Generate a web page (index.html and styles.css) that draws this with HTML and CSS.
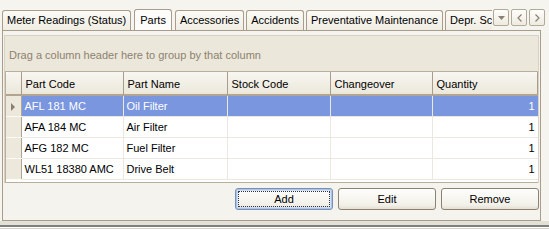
FILE: index.html
```html
<!DOCTYPE html>
<html lang="en">

<head>
  <meta charset="UTF-8">
  <title>Parts</title>
  <link rel="stylesheet" href="styles.css">
</head>

<body>
  <div class="tabStrip">
    <div class="tabs">
      <div class="tab">Meter Readings (Status)</div>
      <div class="tab active">Parts</div>
      <div class="tab">Accessories</div>
      <div class="tab">Accidents</div>
      <div class="tab">Preventative Maintenance</div>
      <div class="tab">Depr. Schedule</div>
    </div>
    <div class="tabBtns">
      <div class="tabBtn">
        <svg width="7" height="4" viewBox="0 0 7 4"><path d="M0 0h7L3.5 4z" fill="#8a8070"/></svg>
      </div>
      <div class="tabBtn">
        <svg width="5" height="8" viewBox="0 0 5 8"><path d="M4.5 0.5L1 4l3.5 3.5" fill="none" stroke="#8a8070" stroke-width="1.2"/></svg>
      </div>
      <div class="tabBtn">
        <svg width="5" height="8" viewBox="0 0 5 8"><path d="M0.5 0.5L4 4 0.5 7.5" fill="none" stroke="#8a8070" stroke-width="1.2"/></svg>
      </div>
    </div>
  </div>

  <div class="panel">
    <div class="gridBox">
      <div class="groupArea">Drag a column header here to group by that column</div>
      <div class="grid">
        <table>
          <colgroup>
            <col style="width:15px">
            <col style="width:102px">
            <col style="width:104px">
            <col style="width:103px">
            <col style="width:102px">
            <col>
          </colgroup>
          <thead>
            <tr>
              <th class="ind first"></th>
              <th>Part Code</th>
              <th>Part Name</th>
              <th>Stock Code</th>
              <th>Changeover</th>
              <th class="last">Quantity</th>
            </tr>
          </thead>
          <tbody>
            <tr class="sel">
              <td class="ind"><span class="arrow"></span></td>
              <td>AFL 181 MC</td>
              <td>Oil Filter</td>
              <td></td>
              <td></td>
              <td class="num">1</td>
            </tr>
            <tr>
              <td class="ind"></td>
              <td>AFA 184 MC</td>
              <td>Air Filter</td>
              <td></td>
              <td></td>
              <td class="num">1</td>
            </tr>
            <tr>
              <td class="ind"></td>
              <td>AFG 182 MC</td>
              <td>Fuel Filter</td>
              <td></td>
              <td></td>
              <td class="num">1</td>
            </tr>
            <tr>
              <td class="ind"></td>
              <td>WL51 18380 AMC</td>
              <td>Drive Belt</td>
              <td></td>
              <td></td>
              <td class="num">1</td>
            </tr>
          </tbody>
        </table>
      </div>
    </div>
    <div class="actions">
      <button class="btn focus"><span>Add</span></button>
      <button class="btn"><span>Edit</span></button>
      <button class="btn"><span>Remove</span></button>
    </div>
  </div>

  <div class="bottomEdge"></div>
</body>

</html>
```

FILE: styles.css
```css
* {
  margin: 0;
  padding: 0;
  box-sizing: border-box;
}
body {
  background: #f5f4ef;
  font-family: "Liberation Sans", Arial, sans-serif;
  font-size: 11px;
  color: #000;
  width: 549px;
  height: 229px;
  overflow: hidden;
}
.tabStrip {
  display: flex;
  align-items: flex-end;
  padding: 8px 0 0 2px;
  height: 30px;
}
.tabs {
  flex: 1;
  display: flex;
  align-items: flex-end;
  gap: 2px;
  overflow: hidden;
  white-space: nowrap;
  height: 22px;
}
.tab {
  flex: none;
  height: 20px;
  padding: 3px 4px 0;
  border: 1px solid #a99c8b;
  border-bottom: none;
  border-radius: 3px 3px 0 0;
  background: linear-gradient(#fbfaf6, #f0ede3);
}
.tab.active {
  height: 22px;
  padding: 4px 5px 0;
  margin: 0 1px -1px;
  background: #fcfcfa;
  position: relative;
  z-index: 1;
}
.tabBtns {
  display: flex;
  gap: 2px;
  padding: 0 4px 3px 1px;
  align-self: flex-start;
  margin-top: 1px;
}
.tabBtn {
  width: 16px;
  height: 17px;
  border: 1px solid #b3a998;
  border-radius: 2px;
  background: linear-gradient(#fdfdfb, #eeebe0);
  display: flex;
  align-items: center;
  justify-content: center;
}
.panel {
  margin: 0 8px 0 2px;
  height: 191px;
  border: 1px solid #a99c8b;
  background: #f4f3ee;
  padding: 4px 1px 0 1px;
}
.gridBox {
  border: 1px solid #d8d2c4;
  border-bottom: none;
  background: #ebe7da;
}
.groupArea {
  height: 35px;
  padding: 13px 0 0 4px;
  color: #8d8270;
}
.grid {
  background: #fff;
  border: 1px solid #b9ad9b;
  border-right: none;
  height: 112px;
}
table {
  width: 100%;
  border-collapse: collapse;
  table-layout: fixed;
}
th {
  height: 23px;
  text-align: left;
  font-weight: normal;
  padding: 2px 0 0 4px;
  background: linear-gradient(#f7f6f0, #ebe7da);
  border-right: 1px solid #a99c8b;
  border-bottom: 2px solid #b1a591;
}
th.first {
  border-top-left-radius: 4px;
}
th.last {
  border-right: 1px solid #a99c8b;
  border-top-right-radius: 5px;
}
td {
  height: 21px;
  padding: 0 0 0 3px;
  border-right: 1px solid #ebe8df;
  border-bottom: 1px solid #ebe8df;
  white-space: nowrap;
  overflow: hidden;
}
td.ind {
  background: #ece9dc;
  border-right: 1px solid #b1a591;
  border-bottom: 1px solid #fbfaf6;
  padding: 0;
  text-align: center;
}
td.num {
  text-align: right;
  padding-right: 3px;
  border-right: none;
}
tr.sel td {
  background: #7a96df;
  color: #fff;
}
tr.sel td.ind {
  background: #ece9dc;
}
.arrow {
  display: inline-block;
  border-left: 4px solid #8a7e6c;
  border-top: 4px solid transparent;
  border-bottom: 4px solid transparent;
  vertical-align: middle;
}
.actions {
  display: flex;
  justify-content: flex-end;
  gap: 5px;
  padding: 5px 0 0;
}
.btn {
  width: 98px;
  height: 22px;
  font-family: inherit;
  font-size: 11px;
  color: #000;
  border: 1px solid #8d8272;
  border-radius: 3px;
  background: linear-gradient(#fefefd, #f2f0e8 80%, #e3dfd3);
  padding: 2px;
}
.btn span {
  display: block;
  height: 100%;
  line-height: 15px;
  border: 1px dotted transparent;
}
.btn.focus {
  box-shadow: inset 0 0 0 1px #a9c4ee, inset 0 0 0 2px #cfe0f7;
  border-color: #7b8fae;
}
.btn.focus span {
  border-color: #333;
}
.bottomEdge {
  height: 10px;
  border-top: 4px solid #e3e0d6;
  background: linear-gradient(#7f7f7f 0, #7f7f7f 2px, #fff 2px, #fff 3px, #d4d0c8 3px);
}
```
